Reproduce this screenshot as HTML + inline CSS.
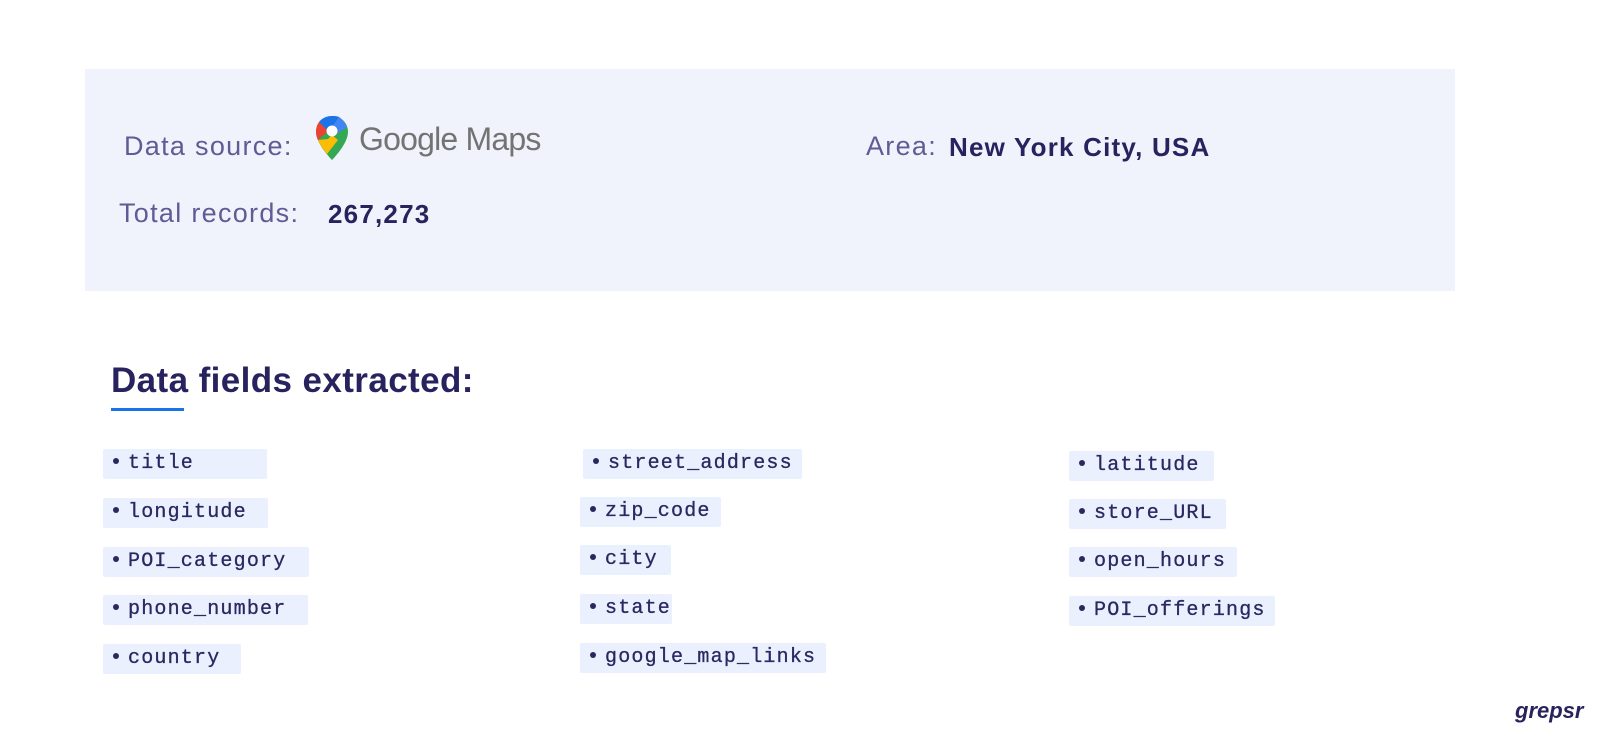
<!DOCTYPE html>
<html><head><style>
body{margin:0;width:1600px;height:753px;background:#fff;position:relative;font-family:"Liberation Sans",sans-serif;overflow:hidden}
.a{position:absolute;white-space:nowrap}
.panel{left:85px;top:69px;width:1370px;height:222px;background:#f0f3fb}
.lab{color:#5f5b95;font-size:27px;letter-spacing:1.3px}
.val{color:#28235e;font-size:26px;font-weight:bold;letter-spacing:1.2px}
.chip{position:absolute;height:30px;background:#eaf0fd;border-radius:2px;font-family:"Liberation Mono",monospace;font-size:20px;color:#2b2760;line-height:30px;padding-left:10px;box-sizing:border-box;letter-spacing:1.2px;-webkit-text-stroke:0.3px #2b2760}
.chip:before{content:"";display:inline-block;width:6px;height:6px;border-radius:50%;background:#2b2760;margin-right:9px;vertical-align:middle;position:relative;top:-2px}
</style></head><body>
<div class="a panel"></div>
<div class="a lab" style="left:124px;top:131px">Data source:</div>
<svg class="a" style="left:314px;top:114px" width="36" height="48" viewBox="0 0 36 48">
<path d="M18 2C9 2 2 9 2 18c0 12 16 28 16 28s16-16 16-28C34 9 27 2 18 2z" fill="#34a853"/>
<path d="M18 2C13 2 8 4 5 8l9 9 4-4 7-10c-2-1-5-1-7-1z" fill="#1a73e8"/>
<path d="M5 8C3 11 2 14 2 18c0 3 1 6 2 8l10-9z" fill="#ea4335"/>
<path d="M4 26c2 5 6 10 9 14l11-14-6-5-4 4z" fill="#fbbc04"/>
<path d="M25 3l-7 10 6 6 9-6c-2-5-5-8-8-10z" fill="#4285f4"/>
<circle cx="18" cy="17" r="5.5" fill="#fff"/>
</svg>
<div class="a" style="left:359px;top:121px;font-size:32px;color:#737373;letter-spacing:-0.8px">Google Maps</div>
<div class="a lab" style="left:119px;top:198px">Total records:</div>
<div class="a val" style="left:328px;top:199px">267,273</div>
<div class="a lab" style="left:866px;top:131px">Area:</div>
<div class="a val" style="left:949px;top:132px">New York City, USA</div>
<div class="a" style="left:111px;top:361px;font-size:35px;font-weight:bold;color:#28235e;letter-spacing:0.4px">Data fields extracted:</div>
<div class="a" style="left:111px;top:408px;width:73px;height:3px;background:#1a73e8"></div>

<div class="chip" style="left:103px;top:449px;width:164px">title</div>
<div class="chip" style="left:103px;top:498px;width:165px">longitude</div>
<div class="chip" style="left:103px;top:547px;width:206px">POI_category</div>
<div class="chip" style="left:103px;top:595px;width:205px">phone_number</div>
<div class="chip" style="left:103px;top:644px;width:138px">country</div>

<div class="chip" style="left:583px;top:449px;width:219px">street_address</div>
<div class="chip" style="left:580px;top:497px;width:141px">zip_code</div>
<div class="chip" style="left:580px;top:545px;width:91px">city</div>
<div class="chip" style="left:580px;top:594px;width:92px">state</div>
<div class="chip" style="left:580px;top:643px;width:246px">google_map_links</div>

<div class="chip" style="left:1069px;top:451px;width:145px">latitude</div>
<div class="chip" style="left:1069px;top:499px;width:157px">store_URL</div>
<div class="chip" style="left:1069px;top:547px;width:168px">open_hours</div>
<div class="chip" style="left:1069px;top:596px;width:206px">POI_offerings</div>

<div class="a" style="left:1515px;top:698px;font-size:22px;font-weight:bold;font-style:italic;color:#28235e">grepsr</div>
</body></html>
